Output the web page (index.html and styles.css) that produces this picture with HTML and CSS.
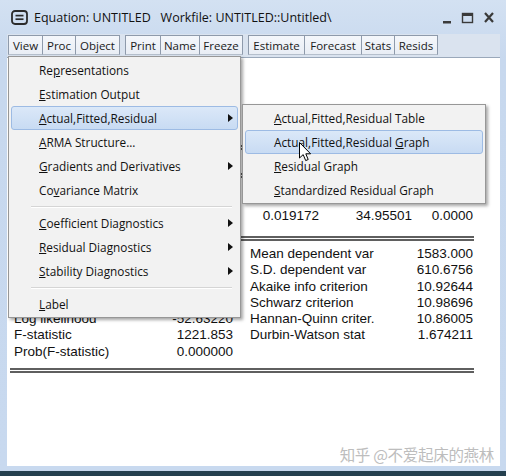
FILE: index.html
```html
<!DOCTYPE html>
<html lang="en">
<head>
    <meta charset="UTF-8">
    <title>Equation: UNTITLED</title>
    <link rel="stylesheet" href="styles.css">
</head>
<body>
    <div class="window">
        <div class="titlebar">
            <svg class="app-icon" width="17" height="15" viewBox="0 0 17 15">
                <rect x="1" y="1" width="15" height="13" rx="3" fill="none" stroke="#2b2b2b" stroke-width="1.8"/>
                <line x1="4.5" y1="5.6" x2="12.5" y2="5.6" stroke="#2b2b2b" stroke-width="1.7"/>
                <line x1="4.5" y1="9.2" x2="12.5" y2="9.2" stroke="#2b2b2b" stroke-width="1.7"/>
            </svg>
            <span class="title">Equation: UNTITLED   Workfile: UNTITLED::Untitled\</span>
            <svg class="win-controls" width="56" height="16" viewBox="0 0 56 16">
                <rect x="0" y="11" width="8" height="2.5" fill="#3a3a3a"/>
                <rect x="19.5" y="3.5" width="10" height="9" fill="none" stroke="#3a3a3a" stroke-width="1.4"/>
                <rect x="19" y="3" width="11" height="3" fill="#3a3a3a"/>
                <path d="M42 3 L50 12 M50 3 L42 12" stroke="#3a3a3a" stroke-width="2.2"/>
            </svg>
        </div>

        <div class="toolbar">
            <div class="tb-group">
                <span class="tb-btn w-view">View</span>
                <span class="tb-btn w-proc">Proc</span>
                <span class="tb-btn w-object">Object</span>
            </div>
            <div class="tb-group">
                <span class="tb-btn w-print">Print</span>
                <span class="tb-btn w-name">Name</span>
                <span class="tb-btn w-freeze">Freeze</span>
            </div>
            <div class="tb-group">
                <span class="tb-btn w-estimate">Estimate</span>
                <span class="tb-btn w-forecast">Forecast</span>
                <span class="tb-btn w-stats">Stats</span>
                <span class="tb-btn w-resids">Resids</span>
            </div>
        </div>

        <div class="content">
            <div class="output">
                <div class="head-line">Dependent Variable: Y</div>
                <div class="head-line">Method: Least Squares</div>
                <div class="head-line">Date: 03/12/20   Time: 10:24</div>
                <div class="head-line">Sample: 1 10</div>
                <div class="head-line">Included observations: 10</div>
                <div class="dline"></div>

                <div class="coef-row coef-head">
                    <span class="var">Variable</span>
                    <span>Coefficient</span>
                    <span>Std. Error</span>
                    <span>t-Statistic</span>
                    <span>Prob.</span>
                </div>
                <div class="dline"></div>
                <div class="coef-row first">
                    <span class="var">C</span>
                    <span>142.4390</span>
                    <span>42.35210</span>
                    <span>3.363210</span>
                    <span>0.0099</span>
                </div>
                <div class="coef-row">
                    <span class="var">X</span>
                    <span>0.670160</span>
                    <span>0.019172</span>
                    <span>34.95501</span>
                    <span>0.0000</span>
                </div>
                <div class="dline spaced"></div>

                <div class="stats">
                    <div class="stats-col">
                        <div class="stat"><span>R-squared</span><span>0.993495</span></div>
                        <div class="stat"><span>Adjusted R-squared</span><span>0.992682</span></div>
                        <div class="stat"><span>S.E. of regression</span><span>52.23919</span></div>
                        <div class="stat"><span>Sum squared resid</span><span>21831.51</span></div>
                        <div class="stat"><span>Log likelihood</span><span>-52.63220</span></div>
                        <div class="stat"><span>F-statistic</span><span>1221.853</span></div>
                        <div class="stat"><span>Prob(F-statistic)</span><span>0.000000</span></div>
                    </div>
                    <div class="stats-col">
                        <div class="stat"><span>Mean dependent var</span><span>1583.000</span></div>
                        <div class="stat"><span>S.D. dependent var</span><span>610.6756</span></div>
                        <div class="stat"><span>Akaike info criterion</span><span>10.92644</span></div>
                        <div class="stat"><span>Schwarz criterion</span><span>10.98696</span></div>
                        <div class="stat"><span>Hannan-Quinn criter.</span><span>10.86005</span></div>
                        <div class="stat"><span>Durbin-Watson stat</span><span>1.674211</span></div>
                    </div>
                </div>
                <div class="dline bottom"></div>
            </div>

            <div class="watermark">知乎 @不爱起床的燕林</div>
        </div>

        <!-- View menu, opened -->
        <div class="menu main-menu">
            <div class="menu-item"><span>Re<u>p</u>resentations</span></div>
            <div class="menu-item"><span><u>E</u>stimation Output</span></div>
            <div class="menu-item active"><span><u>A</u>ctual,Fitted,Residual</span><i class="arrow"></i></div>
            <div class="menu-item"><span><u>A</u>RMA Structure...</span></div>
            <div class="menu-item"><span><u>G</u>radients and Derivatives</span><i class="arrow"></i></div>
            <div class="menu-item"><span>Co<u>v</u>ariance Matrix</span></div>
            <div class="menu-sep"></div>
            <div class="menu-item"><span><u>C</u>oefficient Diagnostics</span><i class="arrow"></i></div>
            <div class="menu-item"><span><u>R</u>esidual Diagnostics</span><i class="arrow"></i></div>
            <div class="menu-item"><span><u>S</u>tability Diagnostics</span><i class="arrow"></i></div>
            <div class="menu-sep"></div>
            <div class="menu-item"><span><u>L</u>abel</span></div>
        </div>

        <div class="menu sub-menu">
            <div class="menu-item"><span><u>A</u>ctual,Fitted,Residual Table</span></div>
            <div class="menu-item active"><span>Actual,Fitted,Residual <u>G</u>raph</span></div>
            <div class="menu-item"><span><u>R</u>esidual Graph</span></div>
            <div class="menu-item"><span><u>S</u>tandardized Residual Graph</span></div>
        </div>

        <svg class="cursor" width="13" height="20" viewBox="0 0 13 20">
            <path d="M0.5 0.5 L0.5 16 L4.2 12.6 L6.7 18.6 L9.2 17.5 L6.8 11.8 L11.6 11.8 Z" fill="#fff" stroke="#000" stroke-width="1"/>
        </svg>
    </div>
    <div class="screen-edge"></div>
</body>
</html>
```

FILE: styles.css
```css
html, body {
    margin: 0;
    padding: 0;
}
body {
    width: 506px;
    height: 476px;
    overflow: hidden;
    background: #c9d9ee;
    font-family: "Open Sans", "Noto Sans", sans-serif;
}
.window {
    position: relative;
    height: 471px;
    display: flex;
    flex-direction: column;
    background: linear-gradient(#d3e1f2, #c7d8ee 60px, #c8d9ef);
}
.screen-edge {
    height: 5px;
    background: #25404f;
}

/* title bar */
.titlebar {
    height: 34px;
    display: flex;
    align-items: center;
    flex-shrink: 0;
}
.app-icon {
    margin-left: 11px;
    margin-top: 1px;
}
.title {
    margin-left: 6px;
    font-size: 12.5px;
    color: #111;
    white-space: pre;
}
.win-controls {
    margin-left: auto;
    margin-right: 7px;
    margin-top: 1px;
}

/* toolbar */
.toolbar {
    height: 23px;
    margin: 0 6px 0 7px;
    display: flex;
    gap: 6px;
    background: #dae3ef;
    border-bottom: 1px solid #9aa8ba;
    flex-shrink: 0;
}
.tb-group {
    display: flex;
}
.tb-btn {
    height: 20px;
    margin-top: 1px;
    box-sizing: border-box;
    display: flex;
    align-items: center;
    justify-content: center;
    font-size: 11.5px;
    color: #1a1a1a;
    background: linear-gradient(#f4f7fb, #e9eef5);
    border: 1px solid #8e9aab;
    border-bottom-color: #b5bfcc;
    margin-right: -1px;
}
.w-view { width: 35px; margin-left: 1px; }
.w-proc { width: 34px; }
.w-object { width: 45px; }
.w-print { width: 36px; }
.w-name { width: 40px; }
.w-freeze { width: 44px; }
.w-estimate { width: 57px; }
.w-forecast { width: 58px; }
.w-stats { width: 34px; }
.w-resids { width: 44px; }

/* output area */
.content {
    position: relative;
    flex: 1;
    margin: 0 6px 5px 7px;
    background: #fff;
}
.output {
    width: 464px;
    margin-left: 3px;
    padding-top: 3px;
    font-family: "Liberation Sans", Arial, sans-serif;
    font-size: 13.5px;
    line-height: 16px;
    color: #111;
}
.head-line {
    padding-left: 4px;
}
.dline {
    height: 1px;
    border-top: 2px solid #5f5f5f;
    border-bottom: 2px solid #5f5f5f;
    margin: 4px 0 3px;
}
.dline.spaced {
    margin: 12px 0 5px;
}
.dline.bottom {
    margin-top: 8px;
}
.coef-row {
    display: grid;
    grid-template-columns: 130px 90px 89px 93px 61px;
    text-align: right;
}
.coef-row.first {
    margin-top: 14px;
}
.coef-row .var {
    text-align: left;
    padding-left: 4px;
}
.stats {
    display: grid;
    grid-template-columns: 223px 223px;
    column-gap: 17px;
    line-height: 16.25px;
}
.stat {
    display: flex;
    justify-content: space-between;
    padding-left: 4px;
}
.stats-col + .stats-col .stat {
    padding-left: 0;
}
.watermark {
    position: absolute;
    right: 6px;
    bottom: 1px;
    font-family: "Noto Sans CJK SC", sans-serif;
    font-size: 15.5px;
    color: #bdbdbd;
    letter-spacing: -0.3px;
}

/* popup menus */
.menu {
    position: absolute;
    box-sizing: border-box;
    background: #f2f2f2;
    border: 1px solid #979797;
    padding: 1px 2px;
    box-shadow: 2px 2px 3px rgba(0, 0, 0, 0.35);
    font-size: 11.8px;
    color: #111;
}
.main-menu {
    left: 8px;
    top: 56px;
    width: 233px;
}
.sub-menu {
    left: 242px;
    top: 104px;
    width: 244px;
}
.menu-item {
    position: relative;
    height: 24px;
    box-sizing: border-box;
    display: flex;
    align-items: center;
    padding-left: 27px;
    border: 1px solid transparent;
    border-radius: 3px;
    white-space: pre;
}
.sub-menu .menu-item {
    padding-left: 28px;
}
.menu-item.active {
    background: linear-gradient(#dbe8f8, #c8dbf3);
    border-color: #9dbbe4;
}
.arrow {
    position: absolute;
    right: 4px;
    top: 7px;
    width: 0;
    height: 0;
    border-top: 4px solid transparent;
    border-bottom: 4px solid transparent;
    border-left: 5px solid #111;
}
.menu-sep {
    height: 9px;
    position: relative;
}
.menu-sep::after {
    content: "";
    position: absolute;
    left: 20px;
    right: 6px;
    top: 4px;
    border-top: 1px solid #d5d5d5;
    border-bottom: 1px solid #fff;
}
.cursor {
    position: absolute;
    left: 299px;
    top: 142px;
}
```
